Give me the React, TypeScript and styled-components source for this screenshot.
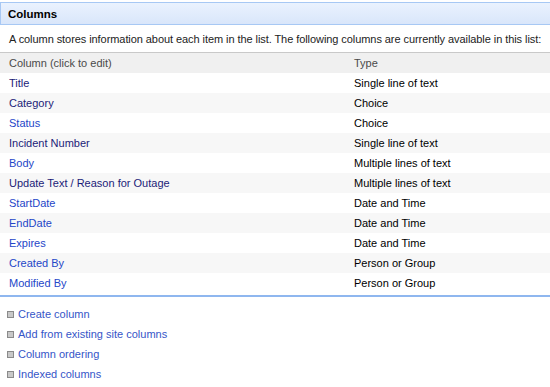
import React from 'react'
import styled, { createGlobalStyle } from 'styled-components'

const GlobalStyle = createGlobalStyle`
  body {
    margin: 0;
    background: #fff;
    font-family: 'Liberation Sans', Arial, sans-serif;
    font-size: 11px;
  }
`

const Page = styled.div`
  width: 550px;
  padding-top: 2px;
`

const TitleBar = styled.h2`
  margin: 0;
  height: 21px;
  display: flex;
  align-items: center;
  padding-left: 7px;
  border: 1px solid #a7c8f4;
  border-right: 0;
  background: linear-gradient(#eaf2fe, #d9e6fa);
  font-size: 11.5px;
  font-weight: bold;
  color: #000;
`

const Description = styled.p`
  margin: 0;
  height: 27px;
  display: flex;
  align-items: center;
  padding-left: 9px;
  white-space: nowrap;
  letter-spacing: -0.07px;
  color: #222;
`

const Table = styled.div`
  border-top: 1px solid #c9c9c9;
  border-bottom: 2px solid #8fb7ef;
  padding-bottom: 2px;
`

const Row = styled.div<{ shaded?: boolean; head?: boolean }>`
  display: grid;
  grid-template-columns: 345px 1fr;
  height: 20px;
  align-items: center;
  padding-left: 9px;
  background: ${p => (p.head ? '#f0f0f0' : p.shaded ? '#f7f7f7' : '#fff')};
  color: ${p => (p.head ? '#4a4a4a' : '#000')};
`

const FieldLink = styled.a<{ visited?: boolean }>`
  color: ${p => (p.visited ? '#1c1c78' : '#2446c8')};
  text-decoration: none;
`

const Actions = styled.ul`
  list-style: none;
  margin: 0;
  padding: 7px 0 0 7px;
`

const Action = styled.li`
  display: flex;
  align-items: center;
  height: 20px;
  gap: 4px;
`

const Bullet = styled.span`
  width: 5px;
  height: 5px;
  border: 1px solid #8a8a8a;
  background: #c8c8c8;
`

const ActionLink = styled.a`
  color: #3555c8;
  text-decoration: none;
`

type Field = { name: string; type: string; visited?: boolean }

const fields: Field[] = [
  { name: 'Title', type: 'Single line of text', visited: true },
  { name: 'Category', type: 'Choice', visited: true },
  { name: 'Status', type: 'Choice' },
  { name: 'Incident Number', type: 'Single line of text', visited: true },
  { name: 'Body', type: 'Multiple lines of text' },
  { name: 'Update Text / Reason for Outage', type: 'Multiple lines of text', visited: true },
  { name: 'StartDate', type: 'Date and Time' },
  { name: 'EndDate', type: 'Date and Time' },
  { name: 'Expires', type: 'Date and Time' },
  { name: 'Created By', type: 'Person or Group' },
  { name: 'Modified By', type: 'Person or Group' },
]

const actions = [
  'Create column',
  'Add from existing site columns',
  'Column ordering',
  'Indexed columns',
]

export default function App() {
  return (
    <Page>
      <GlobalStyle />
      <TitleBar>Columns</TitleBar>
      <Description>
        A column stores information about each item in the list. The following columns are currently available in this list:
      </Description>
      <Table>
        <Row head>
          <span>Column (click to edit)</span>
          <span>Type</span>
        </Row>
        {fields.map((f, i) => (
          <Row key={f.name} shaded={i % 2 === 1}>
            <FieldLink href="#" visited={f.visited}>
              {f.name}
            </FieldLink>
            <span>{f.type}</span>
          </Row>
        ))}
      </Table>
      <Actions>
        {actions.map(a => (
          <Action key={a}>
            <Bullet />
            <ActionLink href="#">{a}</ActionLink>
          </Action>
        ))}
      </Actions>
    </Page>
  )
}
